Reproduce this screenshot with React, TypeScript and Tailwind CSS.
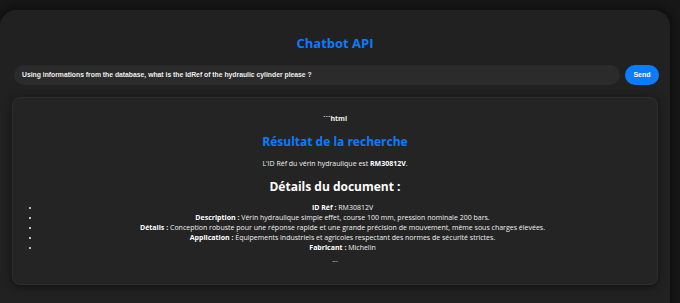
export default function App() {
  const details = [
    { label: "ID Réf :", text: " RM30812V" },
    { label: "Description :", text: " Vérin hydraulique simple effet, course 100 mm, pression nominale 200 bars." },
    { label: "Détails :", text: " Conception robuste pour une réponse rapide et une grande précision de mouvement, même sous charges élevées." },
    { label: "Application :", text: " Équipements industriels et agricoles respectant des normes de sécurité strictes." },
    { label: "Fabricant :", text: " Michelin" },
  ];

  return (
    <div className="h-[303px] overflow-hidden bg-[#181818] pt-[10px] font-['Open_Sans',sans-serif]">
      <div className="h-[310px] w-[670px] rounded-[16px] bg-[#212121] pt-[27px] shadow-[0_0_14px_rgba(0,0,0,0.7)]">
        {/* Header */}
        <h1 className="text-center text-[13px] font-bold leading-[13px] text-[#0a7cff]">Chatbot API</h1>

        {/* Input row */}
        <div className="mt-[15px] flex items-center gap-[5px] pl-[14px] pr-[11px]">
          <div className="flex h-[20px] flex-1 items-center rounded-full bg-[#2b2b2b] px-[8px] font-['Liberation_Sans',sans-serif] text-[6.8px] font-bold text-[#ededed]">
            Using informations from the database, what is the IdRef of the hydraulic cylinder please ?
          </div>
          <button className="h-[20px] w-[34px] rounded-full bg-[#0a7cff] font-['Liberation_Sans',sans-serif] text-[7px] font-bold text-white">
            Send
          </button>
        </div>

        {/* Response */}
        <div className="mx-[12px] mt-[12px] rounded-[8px] border border-[#2e2e2e] bg-[#242424] px-[12px] pb-[19px] pt-[16px] text-center text-[7px] font-medium leading-[10px] text-[#f0f0f0] shadow-[0_2px_8px_rgba(0,0,0,0.45)]">
          <p className="font-bold">```html</p>
          <h2 className="mt-[10px] text-[12px] font-bold leading-[16px] text-[#0a7cff]">Résultat de la recherche</h2>
          <p className="mt-[9px]">
            L'ID Réf du vérin hydraulique est <strong className="text-white">RM30812V</strong>.
          </p>
          <h3 className="mt-[11px] text-[12px] font-bold leading-[14px] text-white">Détails du document :</h3>
          <ul className="mt-[9px] list-disc pl-[15px]">
            {details.map((d) => (
              <li key={d.label}>
                <strong className="text-white">{d.label}</strong>
                {d.text}
              </li>
            ))}
          </ul>
          <p className="mt-[2px]">...</p>
        </div>
      </div>
    </div>
  );
}
